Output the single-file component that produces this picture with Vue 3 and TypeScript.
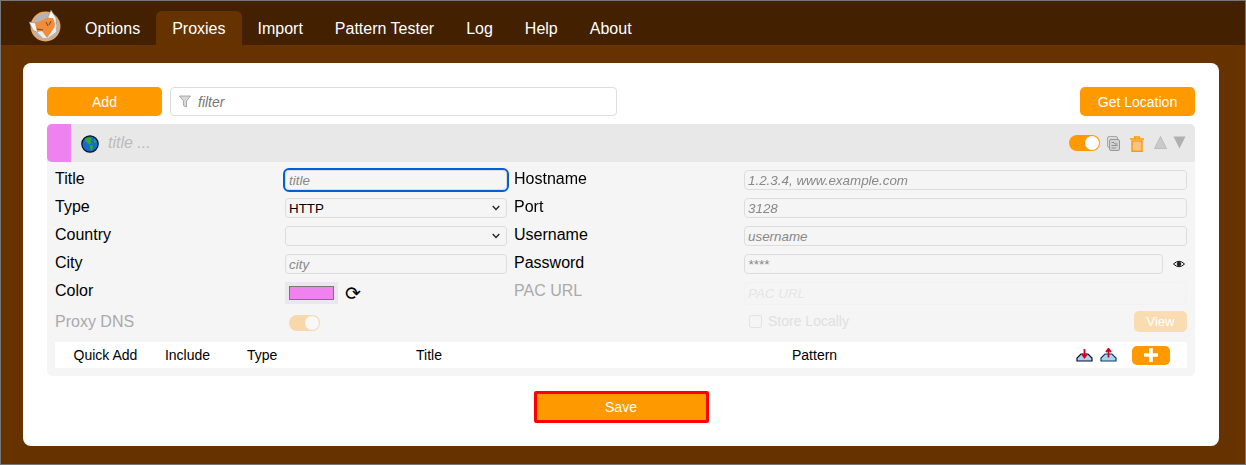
<script setup lang="ts">
import { onMounted, ref } from 'vue';

const tabs = ['Options', 'Proxies', 'Import', 'Pattern Tester', 'Log', 'Help', 'About'];
const activeTab = ref('Proxies');
const titleInput = ref<HTMLInputElement | null>(null);

onMounted(() => {
  titleInput.value?.focus();
});
</script>

<template>
  <div class="page">
    <nav class="nav">
      <svg class="logo" viewBox="0 0 32 32" aria-hidden="true">
        <circle cx="16.500" cy="16.500" r="14.200" fill="#b4b4b4" stroke="#f2a65a" stroke-width="1.500" />
        <path d="M0 12 L7 13 L9 23 L4 20 Z" fill="#f4f4f4" stroke="#777" stroke-width=".5" />
        <path d="M19 7 L22 0 L27 8 L27.500 19 L22 14 Z" fill="#f6f6f6" stroke="#777" stroke-width=".5" />
        <path d="M6 13 Q13 11 17 8 L24 8 Q27 14 25 19 L18 27 L14 27 L8 22 Z" fill="#f28c38" />
        <path d="M8 22 L13 21 L18 28 L14 28 Z M25 18 L27.500 14 L27 22 L18 28.500 Z" fill="#ededed" />
        <path d="M8 19 L14 20 M17 12 L19 16 M22 11 L20 15" stroke="#6d4a2a" stroke-width="1" fill="none" />
      </svg>
      <a v-for="tab in tabs" :key="tab" class="tab" :class="{ active: tab === activeTab }">{{ tab }}</a>
    </nav>

    <main class="main">
      <section class="card">
        <div class="toolbar">
          <button class="btn add-btn" type="button">Add</button>
          <label class="filter">
            <svg class="filter-icon" viewBox="0 0 12 13" aria-hidden="true">
              <path d="M.5 1 H11.500 L7.500 6 V12 L4.500 10.500 V6 Z" fill="#d8d8d8" stroke="#999" stroke-width=".8" />
            </svg>
            <input type="text" placeholder="filter" />
          </label>
          <button class="btn location-btn" type="button">Get Location</button>
        </div>

        <div class="proxy">
          <header class="proxy-head">
            <span class="swatch"></span>
            <svg class="globe" viewBox="0 0 18 18" aria-hidden="true">
              <circle cx="9" cy="9" r="8.200" fill="#0f6fc6" stroke="#0b0b20" stroke-width="1.200" />
              <path d="M4 3.500 L9 2.500 L11 4 L9.500 6 L10.500 8 L8.500 9.500 L6.500 8 L4.500 6.500 Z" fill="#3aa335" />
              <path d="M9 10 L12 10.500 L11.500 14 L10 16 L9 13 Z M13 4 L15.500 6 L15 8 L13 7 Z" fill="#3aa335" />
            </svg>
            <span class="proxy-title">title ...</span>
            <div class="proxy-actions">
              <span class="switch"></span>
              <svg class="copy-icon" viewBox="0 0 13 15" aria-hidden="true">
                <rect x=".5" y=".5" width="10" height="11" rx="1.500" fill="#dadada" stroke="#a8a8a8" />
                <rect x="2.500" y="3.500" width="10" height="11" rx="1.500" fill="#d2d2d2" stroke="#999" />
                <path d="M4.500 6.500 H7 L8 8 H10.500 M4.500 9.500 H10.500 M4.500 12 H9" stroke="#8a8a8a" stroke-width=".9" fill="none" />
              </svg>
              <svg class="trash-icon" viewBox="0 0 14 16" aria-hidden="true">
                <path d="M0 3 H14 M4.500 3 V1 H9.500 V3" stroke="#f90" stroke-width="1.300" fill="none" />
                <rect x="2" y="5" width="10" height="10.300" fill="#f6c57f" stroke="#f90" stroke-width="1.400" />
              </svg>
              <svg class="arrow-icon arrow-up" viewBox="0 0 13 13" aria-hidden="true">
                <path d="M6.500 .5 L12.500 12.500 H.5 Z" fill="#c8cbce" stroke="#b0a8a0" stroke-width=".6" />
              </svg>
              <svg class="arrow-icon arrow-down" viewBox="0 0 13 13" aria-hidden="true">
                <path d="M.5 .5 H12.500 L6.500 12.500 Z" fill="#b0b0b0" />
              </svg>
            </div>
          </header>

          <div class="proxy-body">
            <div class="fields">
              <label class="label">Title</label>
              <input ref="titleInput" class="field" type="text" placeholder="title" />
              <label class="label label-right">Hostname</label>
              <input class="field" type="text" placeholder="1.2.3.4, www.example.com" />

              <label class="label">Type</label>
              <select class="field">
                <option>HTTP</option>
              </select>
              <label class="label label-right">Port</label>
              <input class="field" type="text" placeholder="3128" />

              <label class="label">Country</label>
              <select class="field">
                <option></option>
              </select>
              <label class="label label-right">Username</label>
              <input class="field" type="text" placeholder="username" />

              <label class="label">City</label>
              <input class="field" type="text" placeholder="city" />
              <label class="label label-right">Password</label>
              <div class="password">
                <input class="field" type="text" placeholder="****" />
                <svg class="eye" viewBox="0 0 12 8" aria-hidden="true">
                  <path d="M.5 4 Q6 -1.500 11.500 4 Q6 9.500 .5 4 Z" fill="#eee" stroke="#111" />
                  <circle cx="6" cy="4" r="2.200" fill="#222" />
                </svg>
              </div>

              <label class="label">Color</label>
              <div class="color-cell">
                <span class="color-input"><span class="color-fill"></span></span>
                <span class="refresh">⟳</span>
              </div>
              <label class="label label-right disabled">PAC URL</label>
              <input class="field pac" type="text" placeholder="PAC URL" disabled />

              <label class="label label-dns disabled">Proxy DNS</label>
              <div class="dns-cell"><span class="switch faded"></span></div>
              <span></span>
              <div class="store">
                <label class="store-label"><input type="checkbox" disabled />Store Locally</label>
                <button class="btn view-btn" type="button">View</button>
              </div>
            </div>

            <div class="patterns">
              <span class="col-center">Quick Add</span>
              <span class="col-center">Include</span>
              <span class="col-type">Type</span>
              <span>Title</span>
              <span>Pattern</span>
              <div class="pattern-actions">
                <svg class="tray" viewBox="0 0 17 14" aria-hidden="true">
                  <path d="M1 13 V10 L5 6 H12 L16 10 V13 Z" fill="#a9d3ef" stroke="#0b0b30" stroke-width="1.200" />
                  <path d="M8.500 1 V8 M6 6 L8.500 9.500 L11 6" stroke="#d0021b" stroke-width="1.800" fill="none" />
                </svg>
                <svg class="tray" viewBox="0 0 17 14" aria-hidden="true">
                  <path d="M1 13 V10 L5 6 H12 L16 10 V13 Z" fill="#a9d3ef" stroke="#0c3b70" stroke-width="1.200" />
                  <path d="M8.500 9.500 V2 M6 4 L8.500 .8 L11 4" stroke="#d0021b" stroke-width="1.800" fill="none" />
                </svg>
                <button class="btn plus-btn" type="button" aria-label="Add pattern">
                  <svg viewBox="0 0 14 14" aria-hidden="true"><path d="M7 0 V14 M0 7 H14" stroke="#fff" stroke-width="3.600" /></svg>
                </button>
              </div>
            </div>
          </div>
        </div>

        <div class="save-row">
          <button class="btn save-btn" type="button">Save</button>
        </div>
      </section>
    </main>
  </div>
</template>

<style>
html,
body {
  margin: 0;
  background: #663300;
}
</style>

<style scoped>
.page {
  box-sizing: border-box;
  display: flex;
  flex-direction: column;
  height: 465px;
  border: 1px solid #777;
  background: #663300;
  font-family: 'Liberation Sans', Arial, sans-serif;
  color: #000;
}

.nav {
  display: flex;
  align-items: flex-end;
  height: 44px;
  padding-left: 28px;
  background: #432100;
}

.logo {
  align-self: flex-start;
  width: 32px;
  height: 32px;
  margin: 9px 8px 0 0;
}

.tab {
  padding: 0 16px;
  height: 34px;
  line-height: 35px;
  border-radius: 6px 6px 0 0;
  font-size: 16px;
  color: #fff;
}

.tab.active {
  background: #663300;
}

.main {
  flex: 1;
  padding: 18px 26px 18px 22px;
}

.card {
  box-sizing: border-box;
  height: 100%;
  padding: 24px 24px 0;
  border-radius: 8px;
  background: #fff;
}

.toolbar {
  display: flex;
  gap: 8px;
  height: 29px;
  margin-bottom: 8px;
}

.btn {
  border: 0;
  border-radius: 5px;
  background: #f90;
  font-family: inherit;
  font-size: 14px;
  color: #fff;
  padding: 0;
}

.add-btn,
.location-btn {
  width: 115px;
}

.location-btn {
  margin-left: auto;
}

.filter {
  box-sizing: border-box;
  display: flex;
  align-items: center;
  width: 447px;
  padding-left: 8px;
  border: 1px solid #ddd;
  border-radius: 4px;
}

.filter-icon {
  width: 12px;
  height: 13px;
  margin-right: 7px;
}

.filter input {
  flex: 1;
  border: 0;
  outline: 0;
  padding: 0;
  font: italic 14px 'Liberation Sans', Arial, sans-serif;
}

.filter input::placeholder {
  color: #777;
}

.proxy {
  border-radius: 5px;
  background: #f5f5f5;
}

.proxy-head {
  display: flex;
  align-items: center;
  height: 38px;
  border-radius: 5px 5px 0 0;
  background: #e8e8e8;
}

.swatch {
  align-self: stretch;
  width: 24px;
  border-radius: 5px 0 0 5px;
  background: #ee82ee;
}

.globe {
  width: 18px;
  height: 18px;
  margin: 1px 9px 0 10px;
}

.proxy-title {
  font-size: 16px;
  font-style: italic;
  color: #bbb;
}

.proxy-actions {
  display: flex;
  align-items: center;
  margin-left: auto;
  padding-right: 9px;
}

.switch {
  position: relative;
  display: block;
  width: 31px;
  height: 16px;
  border-radius: 8px;
  background: #f90;
}

.switch::after {
  content: '';
  position: absolute;
  top: 1px;
  right: 1px;
  width: 14px;
  height: 14px;
  border-radius: 50%;
  background: #fff;
}

.switch.faded {
  opacity: 0.3;
}

.copy-icon {
  width: 13px;
  height: 15px;
  margin-left: 7px;
}

.trash-icon {
  width: 14px;
  height: 16px;
  margin: 2px 0 0 10px;
}

.arrow-icon {
  width: 13px;
  height: 13px;
  margin-bottom: 1px;
}

.arrow-up {
  margin-left: 10px;
}

.arrow-down {
  margin-left: 6px;
}

.proxy-body {
  padding: 8px;
}

.fields {
  display: grid;
  grid-template-columns: 230px 222px 237px 443px;
  grid-template-rows: repeat(5, 20px) 22px;
  row-gap: 8px;
  align-items: start;
}

.label {
  font-size: 16px;
  line-height: 18px;
}

.label-dns {
  padding-top: 3px;
}

.label-right {
  padding-left: 7px;
}

.disabled {
  color: #aaa;
}

.field {
  box-sizing: border-box;
  width: 100%;
  height: 20px;
  margin: 0;
  padding: 0 3px;
  border: 1px solid #ddd;
  border-radius: 4px;
  background: transparent;
  font: 13.4px 'Liberation Sans', Arial, sans-serif;
  color: #000;
}

select.field {
  appearance: none;
  background: url("data:image/svg+xml,%3Csvg xmlns='http://www.w3.org/2000/svg' width='8' height='6'%3E%3Cpath d='M.7 1 L4 4.500 L7.300 1' fill='none' stroke='%23222' stroke-width='1.300'/%3E%3C/svg%3E") no-repeat right 6px center;
}

.field:focus {
  outline: 2px solid #005fd7;
  outline-offset: 0;
}

.field::placeholder {
  font-style: italic;
  color: #888;
}

.pac {
  height: 23px;
  border-color: #f2f2f2;
}

.pac::placeholder {
  color: #e6e6e6;
}

.password {
  display: flex;
  align-items: center;
}

.password .field {
  width: 419px;
}

.eye {
  width: 12px;
  height: 8px;
  margin-left: 10px;
}

.color-cell {
  display: flex;
  align-items: center;
  height: 22px;
}

.color-input {
  box-sizing: border-box;
  display: block;
  width: 53px;
  height: 22px;
  padding: 4px;
  background: #e9e9ed;
}

.color-fill {
  box-sizing: border-box;
  display: block;
  height: 14px;
  border: 1px solid #777;
  background: #ee82ee;
}

.refresh {
  margin-left: 7px;
  font: 19px 'DejaVu Sans', sans-serif;
}

.dns-cell {
  padding: 5px 0 0 4px;
}

.store {
  display: flex;
  align-items: center;
  justify-content: space-between;
  height: 22px;
  padding-left: 5px;
}

.store-label {
  display: flex;
  align-items: center;
  gap: 6px;
  font-size: 14px;
  color: #e0e0e0;
}

.store-label input {
  margin: 0;
  width: 13px;
  height: 13px;
  opacity: 0.45;
}

.view-btn {
  width: 53px;
  height: 21px;
  font-size: 13px;
  background: #f9dcb1;
}

.patterns {
  display: grid;
  grid-template-columns: 101px 63px 197px 376px 1fr auto;
  align-items: center;
  height: 26px;
  margin-top: 10px;
  background: #fff;
  font-size: 14px;
}

.col-center {
  text-align: center;
}

.col-type {
  padding-left: 28px;
}

.pattern-actions {
  display: flex;
  align-items: center;
  padding-right: 17px;
}

.tray {
  width: 17px;
  height: 14px;
  margin-right: 7px;
}

.tray + .tray {
  margin-right: 15px;
}

.plus-btn {
  display: flex;
  align-items: center;
  justify-content: center;
  width: 38px;
  height: 19px;
}

.plus-btn svg {
  width: 14px;
  height: 14px;
}

.save-row {
  display: flex;
  justify-content: center;
  margin-top: 15px;
}

.save-btn {
  box-sizing: border-box;
  width: 175px;
  height: 32px;
  border: 3px solid #f00;
  border-radius: 2px;
}
</style>
